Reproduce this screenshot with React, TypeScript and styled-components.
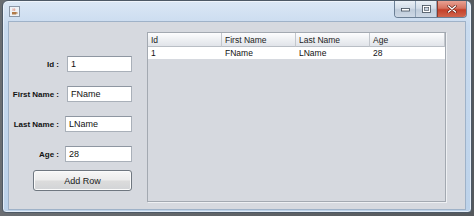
import React from "react";
import styled, { createGlobalStyle } from "styled-components";

const GlobalStyle = createGlobalStyle`
  html, body {
    margin: 0;
    padding: 0;
    background: #5e6368;
  }
  body {
    font-family: "Liberation Sans", Arial, sans-serif;
  }
`;

const Desktop = styled.div`
  width: 474px;
  height: 216px;
  padding-left: 2px;
  box-sizing: border-box;
  background: linear-gradient(90deg, #6a6e72, #55595d);
`;

const Window = styled.div`
  width: 470px;
  height: 213px;
  box-sizing: border-box;
  display: flex;
  flex-direction: column;
  border: 1px solid #4d5966;
  border-radius: 6px 6px 4px 4px;
  background: linear-gradient(180deg, #dbe7f5 0%, #c9dbef 12%, #bcd2ea 100%);
  box-shadow: inset 0 0 0 1px rgba(255, 255, 255, 0.55);
`;

const TitleBar = styled.div`
  height: 20px;
  display: flex;
  align-items: flex-start;
  justify-content: space-between;
  padding: 0 4px 0 6px;
`;

const AppIcon = styled.svg`
  margin-top: 5px;
  width: 11px;
  height: 11px;
`;

const CaptionGroup = styled.div`
  display: flex;
  height: 16px;
  border: 1px solid #6b7f95;
  border-top: none;
  border-radius: 0 0 4px 4px;
  overflow: hidden;
`;

const CaptionButton = styled.div<{ $close?: boolean }>`
  width: ${(p) => (p.$close ? "28px" : "20px")};
  display: flex;
  align-items: center;
  justify-content: center;
  border-left: ${(p) => (p.$close ? "1px solid #8a3b2e" : "none")};
  border-right: ${(p) => (p.$close ? "none" : "1px solid #90a3b8")};
  background: ${(p) =>
    p.$close
      ? "linear-gradient(180deg, #e8a193 0%, #d6725f 45%, #c4402a 55%, #d0654d 100%)"
      : "linear-gradient(180deg, #e9eff6 0%, #d3dde9 45%, #bfccdb 55%, #cdd8e5 100%)"};
`;

const Content = styled.div`
  flex: 1;
  margin: 0 5px 2px 5px;
  display: flex;
  align-items: flex-start;
  padding-top: 10px;
  background: #d6d9df;
  border: 1px solid #9fb2c8;
  box-sizing: border-box;
`;

const FormPanel = styled.div`
  width: 138px;
  padding-top: 24px;
  display: flex;
  flex-direction: column;
`;

const Fields = styled.div`
  display: grid;
  grid-template-columns: 50px 65px;
  column-gap: 8px;
  row-gap: 14px;
  align-items: center;
`;

const Label = styled.label`
  text-align: right;
  font-size: 8px;
  font-weight: 700;
  color: #111;
  white-space: nowrap;
`;

const TextField = styled.div<{ $shift?: number }>`
  height: 16px;
  box-sizing: border-box;
  margin-left: ${(p) => p.$shift ?? 0}px;
  padding: 0 3px;
  display: flex;
  align-items: center;
  background: #fff;
  border: 1px solid #a9b0b9;
  border-top-color: #8e96a1;
  font-size: 9px;
  color: #111;
`;

const AddButton = styled.button`
  margin: 8px 0 0 24px;
  width: 99px;
  height: 21px;
  padding: 0;
  border: 1px solid #6f7780;
  border-radius: 3px;
  background: linear-gradient(180deg, #f7f7f7 0%, #ececec 48%, #dcdcdc 52%, #d2d4d7 100%);
  box-shadow: inset 0 0 0 1px #fbfbfb;
  font-family: "Liberation Sans", Arial, sans-serif;
  font-size: 9px;
  color: #1a1a1a;
`;

const TableScroll = styled.div`
  width: 299px;
  height: 170px;
  box-sizing: border-box;
  border: 1px solid #a3a9b1;
  box-shadow: 1px 1px 0 #eef0f3;
`;

const TableGrid = styled.div`
  display: grid;
  grid-template-columns: 74px 74px 74px 1fr;
`;

const HeaderCell = styled.div`
  height: 14px;
  box-sizing: border-box;
  padding-left: 3px;
  display: flex;
  align-items: center;
  font-size: 8.5px;
  color: #222;
  background: linear-gradient(180deg, #fdfdfe 0%, #eef0f3 50%, #e1e4e9 100%);
  border-right: 1px solid #c3c7cd;
  border-bottom: 1px solid #b9bec5;
  &:last-child {
    border-right: 1px solid #b9bec5;
  }
`;

const Cell = styled.div`
  height: 12px;
  padding-left: 3px;
  display: flex;
  align-items: center;
  background: #fff;
  font-size: 8.5px;
  color: #111;
`;

const columns = ["Id", "First Name", "Last Name", "Age"];
const rows = [["1", "FName", "LName", "28"]];

const fields = [
  { label: "Id :", value: "1", shift: 0 },
  { label: "First Name :", value: "FName", shift: 0 },
  { label: "Last Name :", value: "LName", shift: -2 },
  { label: "Age :", value: "28", shift: -2 },
];

export default function App() {
  return (
    <>
      <GlobalStyle />
      <Desktop>
        <Window>
          <TitleBar>
            <AppIcon viewBox="0 0 11 11">
              <rect x="0.5" y="0.5" width="10" height="10" fill="#eef2f7" stroke="#8b98a8" />
              <path d="M3 6h4v2.5H3z" fill="#b07a48" />
              <path d="M7 6.5h1.2v1.2H7" fill="none" stroke="#b07a48" strokeWidth="0.7" />
              <path d="M4 2.5c.6.8-.4 1.4.2 2.4M5.6 2.5c.6.8-.4 1.4.2 2.4" fill="none" stroke="#d44b2c" strokeWidth="0.6" />
            </AppIcon>
            <CaptionGroup>
              <CaptionButton>
                <svg width="9" height="5" viewBox="0 0 9 5">
                  <rect x="0.5" y="1.5" width="8" height="2.5" fill="#fff" stroke="#3e4a58" strokeWidth="0.8" />
                </svg>
              </CaptionButton>
              <CaptionButton>
                <svg width="9" height="8" viewBox="0 0 9 8">
                  <rect x="0.5" y="0.5" width="8" height="7" fill="#fff" stroke="#3e4a58" strokeWidth="0.8" />
                  <rect x="2.3" y="2.5" width="4.4" height="3" fill="#c9d4e1" stroke="#3e4a58" strokeWidth="0.6" />
                </svg>
              </CaptionButton>
              <CaptionButton $close>
                <svg width="10" height="8" viewBox="0 0 10 8">
                  <path d="M1.5 1l7 6M8.5 1l-7 6" stroke="#5a1a10" strokeWidth="2.6" strokeLinecap="round" />
                  <path d="M1.5 1l7 6M8.5 1l-7 6" stroke="#fff" strokeWidth="1.5" strokeLinecap="round" />
                </svg>
              </CaptionButton>
            </CaptionGroup>
          </TitleBar>
          <Content>
            <FormPanel>
              <Fields>
                {fields.map((f) => (
                  <React.Fragment key={f.label}>
                    <Label>{f.label}</Label>
                    <TextField $shift={f.shift}>{f.value}</TextField>
                  </React.Fragment>
                ))}
              </Fields>
              <AddButton>Add Row</AddButton>
            </FormPanel>
            <TableScroll>
              <TableGrid>
                {columns.map((c) => (
                  <HeaderCell key={c}>{c}</HeaderCell>
                ))}
                {rows.map((r) =>
                  r.map((v, i) => <Cell key={columns[i]}>{v}</Cell>)
                )}
              </TableGrid>
            </TableScroll>
          </Content>
        </Window>
      </Desktop>
    </>
  );
}
